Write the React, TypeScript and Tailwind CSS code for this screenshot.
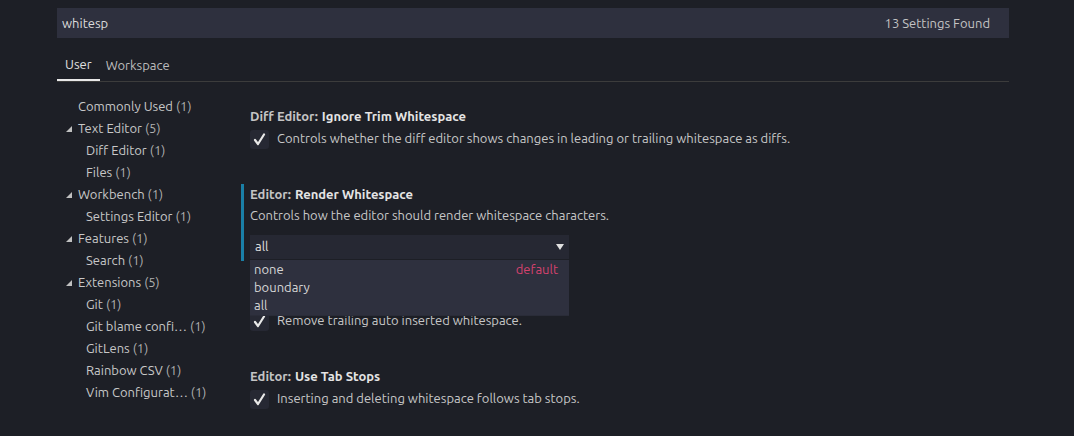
import React from "react";

type NavItem = { label: string; count: number; level: 0 | 1; expanded?: boolean };

const nav: NavItem[] = [
    { label: "Commonly Used", count: 1, level: 0 },
    { label: "Text Editor", count: 5, level: 0, expanded: true },
    { label: "Diff Editor", count: 1, level: 1 },
    { label: "Files", count: 1, level: 1 },
    { label: "Workbench", count: 1, level: 0, expanded: true },
    { label: "Settings Editor", count: 1, level: 1 },
    { label: "Features", count: 1, level: 0, expanded: true },
    { label: "Search", count: 1, level: 1 },
    { label: "Extensions", count: 5, level: 0, expanded: true },
    { label: "Git", count: 1, level: 1 },
    { label: "Git blame confi…", count: 1, level: 1 },
    { label: "GitLens", count: 1, level: 1 },
    { label: "Rainbow CSV", count: 1, level: 1 },
    { label: "Vim Configurat…", count: 1, level: 1 },
];

function Check() {
    return (
        <div className="w-[19px] h-[19px] rounded-[3px] bg-[#262833] flex items-center justify-center shrink-0">
            <svg width="13" height="13" viewBox="0 0 13 13">
                <path d="M2 7 L5 11 L11 1.5" fill="none" stroke="#e8e8e8" strokeWidth="2.2" strokeLinecap="round" strokeLinejoin="round" />
            </svg>
        </div>
    );
}

function Title({ cat, name }: { cat: string; name: string }) {
    return (
        <div className="h-[22px] flex items-center font-bold text-[13px]">
            <span className="text-[#c4c4c4]">{cat}: </span>
            <span className="text-[#e4e4e4] ml-1">{name}</span>
        </div>
    );
}

function CheckSetting({ cat, name, desc }: { cat: string; name: string; desc: string }) {
    return (
        <div className="pl-[9px]">
            <Title cat={cat} name={name} />
            <div className="flex items-center gap-[8px] h-[22px]">
                <Check />
                <span className="text-[#c8c8c8]">{desc}</span>
            </div>
        </div>
    );
}

export default function App() {
    return (
        <div
            className="w-[1074px] h-[436px] bg-[#1d1f26] text-[13px] text-[#c8c8c8] overflow-hidden pt-[8px]"
            style={{ fontFamily: "Ubuntu, 'Noto Sans', sans-serif" }}
        >
            <div className="mx-[57px] w-[952px]">
                <div className="h-[30px] bg-[#2e303e] flex items-center justify-between pl-[5px] pr-[19px] pt-[2px]">
                    <span className="text-[#dcdcdc]">whitesp</span>
                    <span className="text-[#c4c4c4]">13 Settings Found</span>
                </div>
                <div className="mt-[12px] flex border-b border-[#3c3c3c] h-[32px]">
                    <div className="px-[8px] h-full flex items-center text-[#e0e0e0] border-b-2 border-[#e8e8e8] -mb-px">User</div>
                    <div className="px-[8px] h-full flex items-center text-[#bcbcbc] -ml-[2px]">Workspace</div>
                </div>
                <div className="flex mt-[14px]">
                    <div className="w-[184px] shrink-0">
                        {nav.map((n) => (
                            <div key={n.label} className="h-[22px] flex items-center">
                                <div className="w-[21px] shrink-0 flex justify-end pr-[6px]">
                                    {n.expanded && (
                                        <svg width="6" height="6" viewBox="0 0 6 6">
                                            <path d="M6 0 L6 6 L0 6 Z" fill="#c0c0c0" />
                                        </svg>
                                    )}
                                </div>
                                <span className={n.level === 1 ? "ml-[8px] text-[#c8c8c8] whitespace-nowrap" : "text-[#c8c8c8] whitespace-nowrap"}>
                                    {n.label} <span className="text-[#b0b0b0]">({n.count})</span>
                                </span>
                            </div>
                        ))}
                    </div>
                    <div className="flex-1">
                        <div className="mt-[10px]">
                            <CheckSetting
                                cat="Diff Editor"
                                name="Ignore Trim Whitespace"
                                desc="Controls whether the diff editor shows changes in leading or trailing whitespace as diffs."
                            />
                        </div>
                        <div className="mt-[34px] relative border-l-[3px] border-[#1a7fa6] pl-[6px] pb-[2px]">
                            <Title cat="Editor" name="Render Whitespace" />
                            <div className="h-[20px] flex items-center">Controls how the editor should render whitespace characters.</div>
                            <div className="mt-[9px] w-[319px] h-[24px] bg-[#262833] flex items-center justify-between pl-[5px] pr-[5px] text-[#e0e0e0]">
                                <span>all</span>
                                <svg width="8" height="8" viewBox="0 0 8 8">
                                    <path d="M0 1 L8 1 L4 7 Z" fill="#e0e0e0" />
                                </svg>
                            </div>
                            <div className="absolute left-[6px] top-[76px] w-[319px] bg-[#2e303e] z-10 pt-[1px] border-b border-[#2a2c38]">
                                <div className="h-[18px] flex items-center justify-between pl-[4px] pr-[11px]">
                                    <span className="text-[#d6d6d6]">none</span>
                                    <span className="text-[#d5426e]">default</span>
                                </div>
                                <div className="h-[18px] flex items-center pl-[4px] text-[#d6d6d6]">boundary</div>
                                <div className="h-[18px] flex items-center pl-[4px] text-[#d6d6d6]">all</div>
                            </div>
                        </div>
                        <div className="mt-[27px]">
                            <CheckSetting cat="Editor" name="Trim Auto Whitespace" desc="Remove trailing auto inserted whitespace." />
                        </div>
                        <div className="mt-[34px]">
                            <CheckSetting cat="Editor" name="Use Tab Stops" desc="Inserting and deleting whitespace follows tab stops." />
                        </div>
                    </div>
                </div>
            </div>
        </div>
    );
}
